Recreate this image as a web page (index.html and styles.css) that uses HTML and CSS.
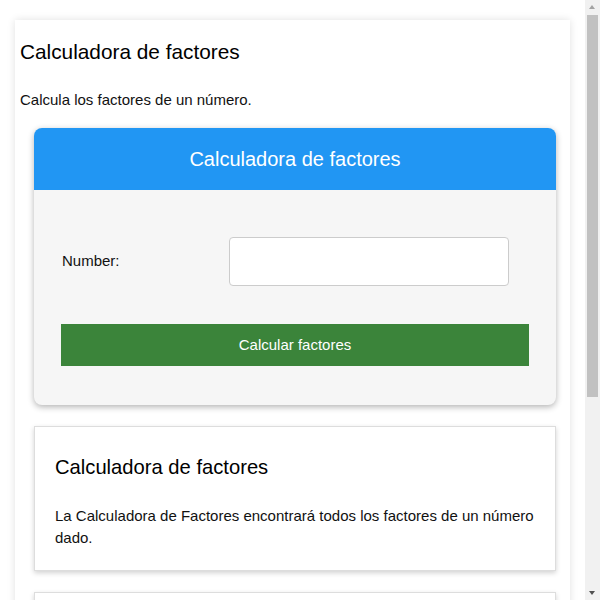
FILE: index.html
```html
<!DOCTYPE html>
<html lang="es">
<head>
    <meta charset="UTF-8">
    <meta name="viewport" content="width=device-width, initial-scale=1.0">
    <title>Calculadora de factores</title>
    <link rel="stylesheet" href="styles.css">
</head>
<body>
    <div class="page">
        <h2 class="page-title">Calculadora de factores</h2>
        <p class="intro">Calcula los factores de un número.</p>

        <div class="calc">
            <div class="calc-header">Calculadora de factores</div>
            <div class="calc-body">
                <div class="calc-row">
                    <label for="number">Number:</label>
                    <input type="text" id="number">
                </div>
                <button id="calcButton">Calcular factores</button>
            </div>
        </div>

        <div class="info">
            <h2>Calculadora de factores</h2>
            <p>La Calculadora de Factores encontrará todos los factores de un número dado.</p>
        </div>

        <div class="info">
            <h2>¿Qué son los factores?</h2>
            <p>Los factores de un número son los números enteros que lo dividen exactamente, sin dejar resto. Por ejemplo, los factores de 12 son 1, 2, 3, 4, 6 y 12.</p>
            <p>Todo número entero mayor que 1 tiene al menos dos factores: el 1 y el propio número.</p>
        </div>
    </div>

    <div class="scrollbar" aria-hidden="true">
        <span class="arrow up"></span>
        <span class="thumb"></span>
        <span class="arrow down"></span>
    </div>
</body>
</html>
```

FILE: styles.css
```css
body {
    margin: 0;
    padding: 20px 30px 20px 15px;
    background-color: #fff;
    font-family: "Liberation Sans", Arial, sans-serif;
    color: #111;
}
.page {
    background: #fff;
    padding: 0 5px 21px 5px;
    box-shadow: 0 0 8px rgba(0, 0, 0, 0.12);
}
h2 {
    font-size: 20px;
    font-weight: normal;
    line-height: 24px;
    color: #000;
}
.page-title {
    font-size: 20.8px;
    margin: 0;
    padding-top: 20px;
    margin-bottom: 25px;
}
.intro {
    font-size: 15px;
    line-height: 22px;
    margin: 0 0 17px 0;
}
.calc {
    margin: 0 9px 0 14px;
    border-radius: 8px;
    background: #f6f6f6;
    box-shadow: 0 2px 6px rgba(0, 0, 0, 0.3);
}
.calc-header {
    background: #2196f3;
    color: #fff;
    font-size: 20px;
    line-height: 24px;
    padding: 19px 0;
    text-align: center;
    border-radius: 8px 8px 0 0;
}
.calc-body {
    padding: 47px 27px 39px 27px;
}
.calc-row {
    display: flex;
    align-items: center;
    margin-bottom: 38px;
}
.calc-row label {
    width: 167px;
    font-size: 15px;
    padding-left: 1px;
    margin-bottom: 2px;
}
.calc-row input {
    width: 280px;
    height: 49px;
    box-sizing: border-box;
    border: 1px solid #ccc;
    border-radius: 4px;
    background: #fff;
    font-size: 15px;
}
button {
    display: block;
    width: 100%;
    height: 42px;
    padding: 0 0 2px 0;
    background-color: #3b843a;
    color: #fff;
    border: none;
    font-family: "Liberation Sans", Arial, sans-serif;
    font-size: 15px;
    cursor: pointer;
}
button:hover {
    background-color: #337532;
}
.info {
    margin: 21px 9px 0 14px;
    background: #fff;
    border: 1px solid #ddd;
    padding: 28px 20px 21px 20px;
    box-shadow: 0 2px 5px rgba(0, 0, 0, 0.18);
}
.info h2 {
    font-size: 20.2px;
    margin: 0 0 26px 0;
}
.info p {
    font-size: 15px;
    line-height: 22px;
    margin: 0;
}
.info p + p {
    margin-top: 14px;
}

/* fake browser scrollbar, the screenshot hides the real one */
.scrollbar {
    position: fixed;
    top: 0;
    right: 0;
    width: 15px;
    height: 100%;
    background: #f1f1f1;
}
.thumb {
    position: absolute;
    top: 15px;
    left: 2px;
    width: 11px;
    height: 382px;
    background: #c1c1c1;
}
.arrow {
    position: absolute;
    left: 4px;
    width: 0;
    height: 0;
    border-left: 3.5px solid transparent;
    border-right: 3.5px solid transparent;
}
.arrow.up {
    top: 5px;
    border-bottom: 4px solid #a3a3a3;
}
.arrow.down {
    bottom: 5px;
    border-top: 4px solid #505050;
}
```
